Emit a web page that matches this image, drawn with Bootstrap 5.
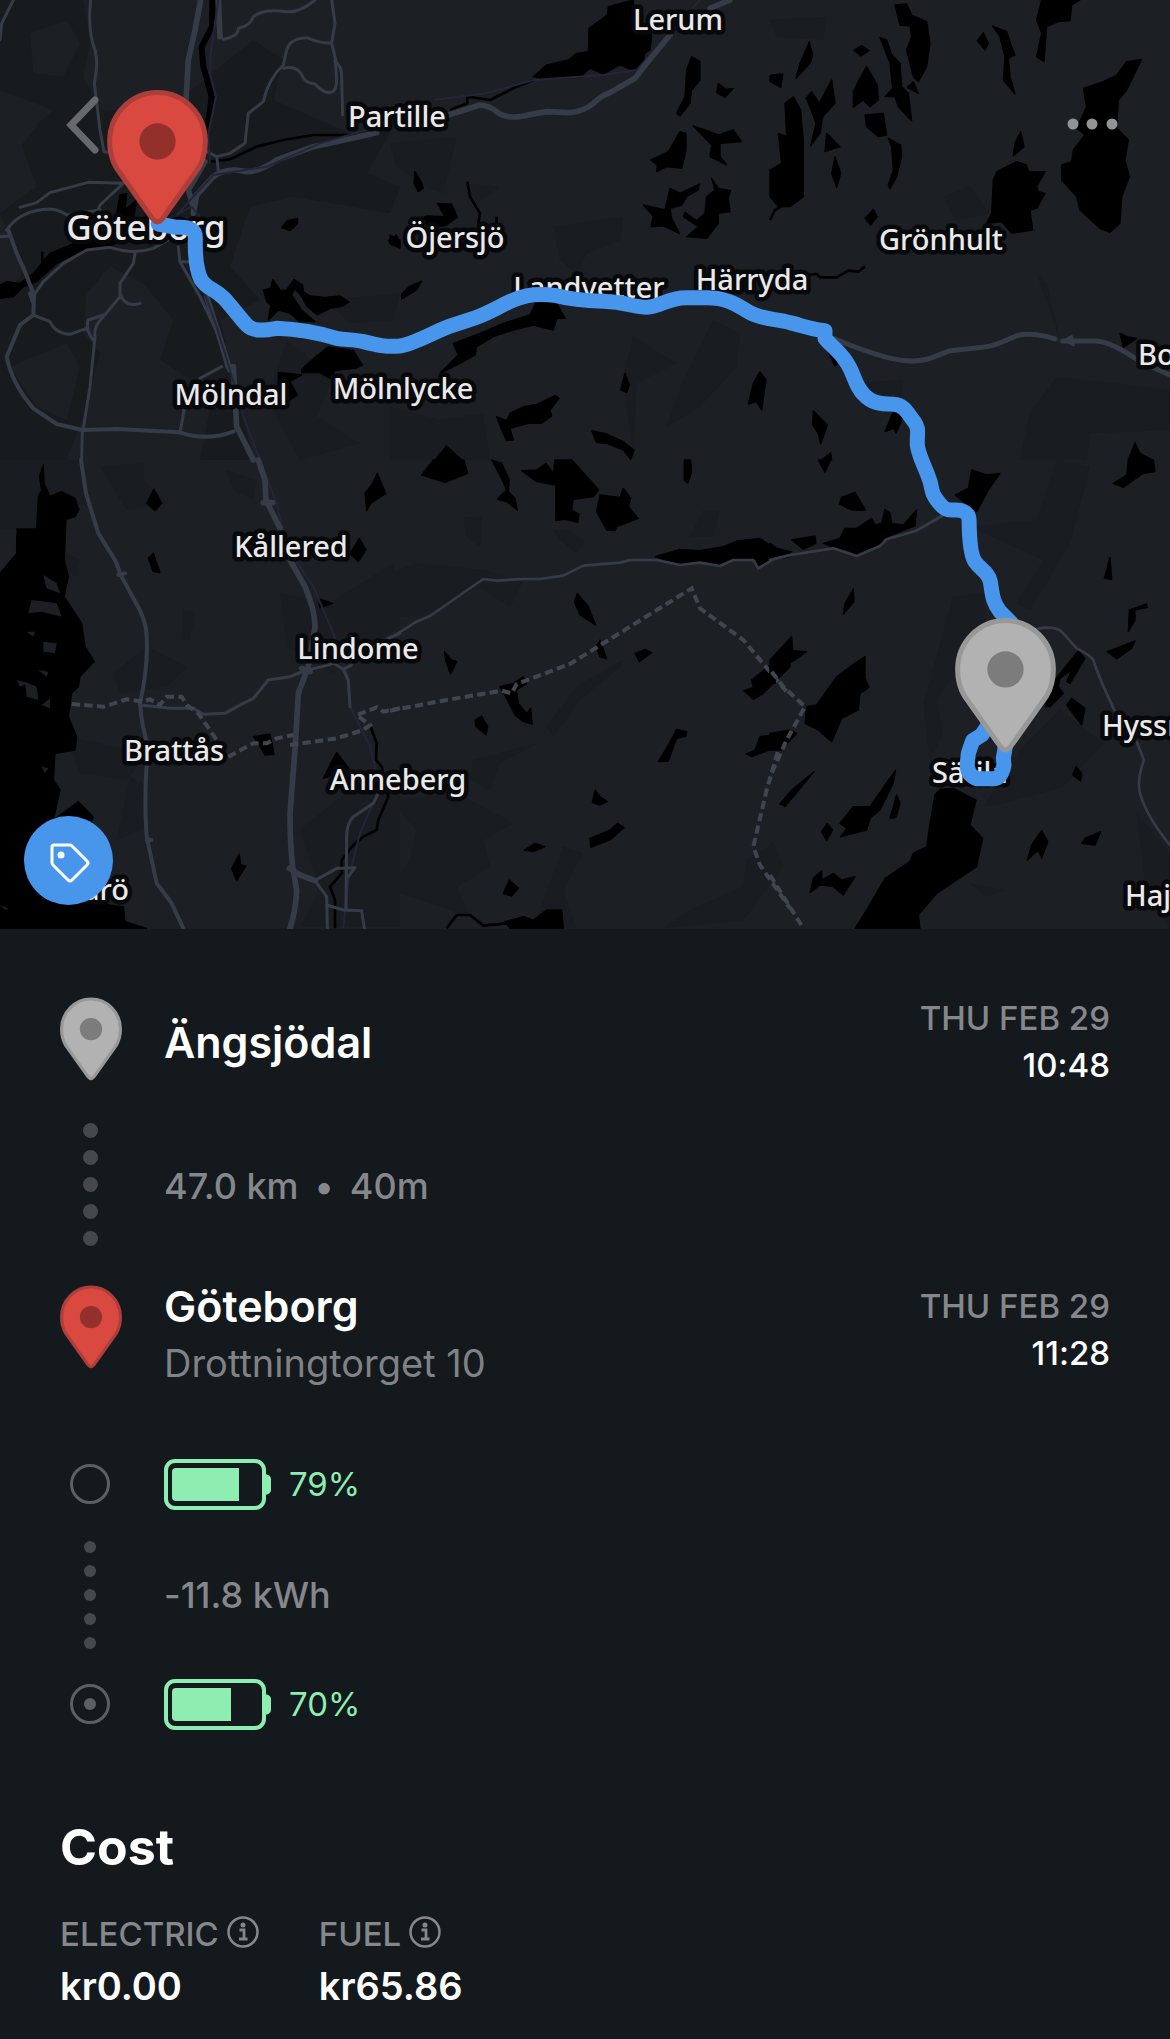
<!DOCTYPE html>
<html lang="en">
<head>
<meta charset="utf-8">
<meta name="viewport" content="width=device-width, initial-scale=1">
<title>Trip details</title>
<link rel="stylesheet" href="https://cdn.jsdelivr.net/npm/bootstrap@5.3.0/dist/css/bootstrap.min.css">
<script src="https://cdn.jsdelivr.net/npm/bootstrap@5.3.0/dist/js/bootstrap.bundle.min.js"></script>
<style>
  body { background: #14191d; color: #fff; font-family: Inter, "Liberation Sans", sans-serif; font-feature-settings: "calt" 0; }
  .map-view svg.map-art { display: block; width: 100%; height: auto; }
  .land { fill: #1c1f24; }
  .shade { fill: #191c20; }
  .shade.town-area { fill: #171b1e; }
  .lake { fill: #000; stroke: #000; stroke-width: 4; stroke-linejoin: round; }
  .stream { fill: none; stroke: #000; stroke-width: 8; stroke-linejoin: round; }
  .road { fill: none; stroke: #363c47; stroke-width: 9; stroke-linejoin: round; stroke-linecap: round; }
  .road.main { stroke-width: 17; }
  .road.mid { stroke-width: 12; }
  .rail { fill: none; stroke: #24253a; stroke-width: 6; }
  .border-line { fill: none; stroke: #404650; stroke-width: 12; stroke-dasharray: 25 13; }
  .trip-line { fill: none; stroke: #4895ec; stroke-width: 45; stroke-linejoin: round; stroke-linecap: round; }
  .town { font-family: "Noto Sans", "Open Sans", sans-serif; font-size: 29px; font-weight: 500; fill: #e9e9e9; stroke: #07080a; stroke-width: 9px; stroke-linejoin: round; paint-order: stroke; text-anchor: middle; }
  .town.city { font-size: 35px; }
  .town.from-left { text-anchor: start; }
  .map-btn { position: absolute; padding: 0; border: 0; background: none; line-height: 0; }
  .btn-back { left: 60px; top: 90px; }
  .btn-more { right: 48px; top: 105px; }
  .btn-tag { left: 24px; bottom: 24px; width: 89px; height: 89px; border-radius: 50%; background: #4895ec; }
  .trip-body { padding: 66px 60px 24px; }
  .rail-col { width: 60px; flex: none; }
  .pin-col { padding-top: 2px; }
  .step { gap: 44px; }
  .place { font-size: 43px; line-height: 46px; font-weight: 600; margin: 0; }
  .street { font-size: 38px; line-height: 48px; color: #808285; margin-top: 10px; }
  .when { font-size: 33px; line-height: 47px; font-weight: 500; }
  .dim { color: #85878a; }
  .metric { font-size: 36px; line-height: 46px; font-weight: 500; color: #85878a; }
  .leg { height: 194px; }
  .leg.energy { height: 169px; }
  .dots { gap: 12px; padding-bottom: 4px; }
  .dots i { width: 15px; height: 15px; border-radius: 50%; background: #45484d; }
  .energy .dots { padding-bottom: 0; }
  .energy .dots i { width: 12px; height: 12px; }
  .charge { margin-top: 72px; }
  .soc { gap: 18px; font-size: 33px; line-height: 51px; color: #8eedb1; }
  .cost-title { font-size: 50px; line-height: 58px; font-weight: 700; margin: 88px 0 35px; }
  .cost-row { gap: 60px; }
  .amount { font-size: 38px; line-height: 56px; font-weight: 600; }
  .info-btn { padding: 0; border: 0; background: none; color: #85878a; line-height: 0; margin-bottom: 6px; }
</style>
</head>
<body>
<svg width="0" height="0" class="position-absolute" aria-hidden="true">
  <symbol id="pin" viewBox="0 0 100 134">
    <path d="M50 131C47 131 45 128 43 125L9 77C5 70 2.500 62 2.500 51A47.500 48.500 0 0 1 97.500 51C97.500 62 95 70 91 77L57 125C55 128 53 131 50 131Z" fill="currentColor" stroke="var(--edge)" stroke-width="5"/>
    <circle cx="50" cy="51" r="18" fill="var(--hole)"/>
  </symbol>
  <symbol id="info" viewBox="0 0 32 32">
    <circle cx="16" cy="16" r="14.500" fill="none" stroke="currentColor" stroke-width="2.500"/>
    <circle cx="16" cy="9" r="2.500" fill="currentColor"/>
    <path d="M12.500 14H17V22.500M12 23H20.500" fill="none" stroke="currentColor" stroke-width="2.800"/>
  </symbol>
</svg>

<header class="map-view position-relative overflow-hidden">
<svg class="map-art" viewBox="0 0 1170 929" role="img" aria-label="Route map">
  <rect class="land" width="1170" height="929"/>
  <g transform="scale(.33333)">
    <!-- north-west -->
    <g>
      <path class="shade town-area" d="M0 0H250L270 120 250 230 300 330 500 330 760 120 850 180 820 300 1050 400 1180 380 1100 520 1200 560 1170 640 880 590 750 620 690 800 780 900 660 960 760 1380H600L640 1180 480 1080 520 960 430 850 330 800 260 880 250 1000 300 1060 250 1250 200 1380H0V900L70 820 0 640 110 560 60 420 160 330 0 270Z"/>
      <path class="land" d="M0 350 70 330 110 380 60 440 0 450ZM90 100 200 60 240 130 190 230 100 220ZM30 1100 200 1030 240 1100 200 1260 110 1220ZM330 1080 560 1130 620 1250 400 1260 320 1180ZM290 880 310 810 350 900 310 960Z"/>
      <path class="shade" d="M860 1020 1000 1130 950 1250 1080 1330 900 1380 800 1200ZM980 900 1200 880 1180 960 1050 970Z"/>
      <path class="stream" style="stroke-width:18" d="M637 0 636 80 605 140 610 200 635 290 630 330 600 480"/>
      <path class="stream" d="M630 485 690 478 770 440 850 420 940 405 1130 405"/>
      <path class="lake" d="M0 855 20 845 60 850 100 820 150 760 210 735 330 700 350 640 360 585 380 580 375 630 410 600 400 660 440 650 440 690 330 738 240 755 170 790 110 845 70 860 40 890 0 895ZM845 683 862 662 893 655 892 672 870 692ZM1165 722 1190 705 1200 735 1175 735ZM790 870 812 865 818 838 842 872 860 870 882 838 908 855 910 875 930 888 975 892 1020 888 1047 906 1030 918 990 925 952 945 920 918 905 890 885 865 875 885 905 930 945 965 900 965 870 940 835 930 805 960 812 915 800 905ZM905 1108 945 1072 985 1040 1060 1052 1087 1095 1070 1104 1005 1112 990 1135 960 1118 905 1118ZM835 1118 870 1120 905 1125 870 1145 892 1185 870 1200 835 1180Z"/>
      <path class="stream" d="M127 755V800"/>
      <path class="road" d="M40 0 5 70 0 120M272 0Q262 90 285 150 296 190 283 250L300 390 312 455 325 457M995 0 1005 70 995 130 1010 190Q1025 200 1025 230L1028 345M945 0Q900 38 860 35 790 25 760 50 750 78 715 85 715 110 670 118M995 130Q960 130 920 113 870 115 860 150L850 195Q805 235 790 305L745 340 735 430 690 460 650 470 620 455M850 205Q890 195 905 225 915 250 945 252 980 290 1002 272 1015 260 1005 180M650 470 655 510M60 622 110 608 150 578 265 547 370 550 300 615 290 640M20 690Q60 630 150 627 180 630 200 645L300 630M0 710 30 708M102 885 130 845 190 790 260 750 330 742Q400 765 460 745L540 700M405 760 400 790 360 850 360 890 310 950Q280 980 285 1010L270 1160 250 1285M360 880Q375 925 420 910M310 945 265 960Q255 990 280 1020M260 985 210 1003Q165 1000 150 965L100 945M535 740 540 785 600 890 655 1005 680 1100M600 1135 665 1100M540 785H575M553 1225 540 1300M247 1290 245 1380"/>
      <path class="road mid" d="M25 690 50 760 75 815 102 885 100 945 60 975 20 1070Q35 1150 100 1225L170 1272 247 1290 350 1287 540 1297Q620 1325 700 1295M90 880 100 910"/>
      <path class="road main" d="M602 0 585 90 565 180 558 300M655 0 660 110M615 485 565 570 580 620M1130 398 940 440 830 480Q780 515 740 515 680 500 640 530L590 585 580 640M700 1100 710 1280 760 1380M620 890 655 1000 690 1110"/>
      <path class="rail" d="M655 0 632 160 630 220 648 290 625 400 630 490M1170 370 960 430 800 500 640 525 530 645 575 620 600 650 610 870 650 980 690 1110 730 1250 780 1380"/>
    </g>
    <!-- north -->
    <g transform="translate(1170 0)">
      <path class="shade" d="M0 430 200 410 160 580 110 560 20 500ZM490 680 700 650 690 720 590 760 560 820 510 780ZM970 960 1050 1000 1040 1100 930 1220 830 1280 880 1140ZM730 1010 860 1090 740 1150 730 1380 700 1130ZM240 550 330 560 260 610ZM0 1220 150 1260 280 1240 300 1380 0 1380Z"/>
      <path class="lake" d="M430 230 470 195 535 180 560 160 595 155 597 85 652 45 655 20 730 0 735 60 785 105 780 150 765 160 755 205 730 212 690 195 640 222 600 205 570 232 450 235ZM905 170 930 185 930 240 905 270 900 310 870 348 860 340 885 290 890 210ZM985 250 1008 268 1030 265 1005 292 980 278ZM1145 225 1178 222 1172 262 1145 245ZM870 395 888 400 888 450 875 505 830 500 800 515 802 495 782 480 835 455ZM910 378 960 395 985 405 1030 390 1055 425 990 430 990 470 1010 495 960 470 965 435ZM840 565 870 580 928 552 925 570 890 590 875 615 840 625 845 655 868 700 820 678 783 680 790 648 760 615 825 630ZM965 535 985 565 1022 572 1015 595 1020 635 985 640 985 670 950 715 890 710 925 680 880 650 885 637 920 662 945 640 950 590 975 570ZM75 515 95 548 100 565 85 575 72 550ZM142 610 185 612 202 652 170 675 100 690 70 665 110 648 165 650ZM0 705 30 720 30 745 0 730ZM95 843 80 870 35 897 35 882 60 858ZM190 1030 270 1000 340 970 420 945 440 905 500 910 525 955 500 955 490 990 430 975 370 990 310 1010 260 1040 255 1065 210 1090 150 1120 205 1065ZM320 1250 350 1262 360 1240 400 1220 440 1213 495 1187 507 1195 480 1230 485 1248 455 1270 415 1270 360 1285 370 1320 350 1322 335 1290ZM705 1120 718 1155 710 1178 692 1170ZM605 1292 650 1302 700 1325 732 1350 722 1378 700 1350 650 1330 620 1328ZM1110 1115 1128 1140 1115 1230 1100 1205 1075 1212 1090 1150ZM135 1380 170 1338 215 1380Z"/>
      <path class="stream" d="M232 545 240 590 270 640 265 670 300 690M180 330 232 310 232 290 300 300 380 260 430 240M320 680V650"/>
      <path class="rail" d="M130 300 290 280 430 240 640 225 740 210 830 110 930 0"/>
      <path class="road main" d="M175 345 270 315Q300 318 320 335 345 355 390 350 440 340 470 335L540 338Q580 335 610 310 635 285 660 278L735 235 770 190 840 105M960 25 1020 0"/>
    </g>
    <!-- north-east -->
    <g transform="translate(2310 0)">
      <path class="shade" d="M780 1240 860 1130 1200 1170V1290L960 1300 950 1380H750ZM520 590 600 560 660 640 560 660ZM0 60 170 50 160 120 20 110ZM800 820 830 850 870 1020ZM240 1150 400 1140 390 1200Z"/>
      <path class="lake" d="M118 125 128 165 120 190 78 235 90 190ZM0 228 38 225 32 260 0 245ZM70 290 92 330 100 420 100 590 60 620 25 620 0 590V510L35 490 25 400 50 410 45 310ZM185 240 195 310 158 350 150 400 122 437 138 370 120 320 108 295 125 275 148 310ZM170 400 210 440 165 455ZM195 470 212 520 200 562 185 520ZM252 150 275 137 297 152 272 168ZM290 200 322 255 325 300 300 320 280 300 250 322 250 275 270 235ZM330 112 350 120 365 165 390 190 395 260 415 280 425 362 385 320 375 290 345 290 368 265 360 190ZM375 15 410 12 425 45 470 65 480 130 470 200 445 245 430 230 410 150 425 110 420 78 390 75ZM430 245 445 280 412 262ZM285 345 340 340 350 405 325 410 290 380ZM355 415 392 435 395 470 380 530 360 567 355 555 370 510 365 440ZM310 628 322 650 302 675 285 655ZM640 98 655 130 645 150 622 122ZM668 78 710 95 725 140 735 165 715 175 720 230 735 282 700 240 705 170 690 110ZM815 0H930L905 15 900 62 865 65 830 80 822 185 800 170 815 100 800 60ZM752 395 762 440 730 468 735 430ZM680 515 740 485 770 495 775 515 825 515 800 560 805 575 825 580 800 625 780 630 788 690 725 700 695 665 650 670 665 640 670 540ZM1115 178 1070 270 1045 300 1040 385 1075 420 1065 480 1078 530 1055 590 1050 670 1020 697 990 685 930 630 920 590 875 540 875 495 905 485 910 450 945 405 920 385 950 320 940 265 1000 245 1040 225 1070 185ZM1050 1000 1070 1010 1100 1015 1060 1042ZM165 1035 215 1080 195 1098ZM130 1232 172 1275 152 1332 145 1300 128 1275ZM370 1235 398 1255 378 1300 372 1285 345 1295ZM1095 1328 1110 1360 1150 1380H1075ZM182 1358 185 1380H155Z"/>
      <path class="stream" d="M110 825 140 822 150 832 200 832 235 812 265 815 285 800M50 610 15 630 0 660"/>
      <path class="road main" style="stroke-width:15" d="M190 1015Q270 1050 350 1072 430 1092 480 1075L540 1052 650 1040Q680 1035 740 1007 790 995 855 1017M878 1023H980Q1030 1028 1110 1085L1200 1125"/>
      <path class="road" d="M885 1020 905 1010 910 1035Z"/>
    </g>
    <!-- south-west -->
    <g transform="translate(0 1380)">
      <path class="shade" d="M0 0H240L260 140 190 110 120 170 110 210 0 210ZM300 20 430 10 430 60 500 130 380 150ZM680 30 770 60 760 120 700 90ZM550 450 585 460 570 540 545 540ZM840 400 990 430 1180 310 1200 500 1000 640 860 560ZM340 640 440 560 560 620 500 680 360 700ZM200 830 440 880 380 960 240 940ZM900 1110 1060 980 1200 1000V1400H900L960 1290ZM390 950 440 980 440 1100 350 1140ZM200 280 240 300 230 350 200 340Z"/>
      <path class="lake" d="M130 15 132 70 150 110 185 95 225 115 237 150 225 170 198 178 193 300 205 350 192 410 245 490 255 560 283 605 240 650 235 680 215 700 205 770 230 830 225 870 165 880 160 960 180 990 160 1080 235 1025 280 1072 250 1130 290 1330 370 1340 375 1385 440 1405H0V340L50 280V207H110L115 110 125 90 118 50ZM462 87 485 130 465 152 440 130ZM460 280 480 338 460 335 445 295ZM1132 40 1157 100 1112 130 1100 152 1095 100 1115 75ZM1078 235 1098 270 1075 305 1050 280ZM955 415 998 430 960 443ZM760 830 810 822 822 883 795 885 775 850ZM1010 877 1035 910 1050 930 970 955 990 915ZM718 1182 722 1215 738 1218 710 1262 695 1225Z"/>
      <path class="land" d="M0 210 50 210 45 270 0 260ZM130 345 170 370 180 400 140 385ZM95 420 170 430 185 470 125 455 85 460ZM130 545 170 550 165 580 130 575ZM80 515 105 515 100 530ZM115 630 145 635 140 650ZM50 660 85 670 60 680ZM75 665 110 680 115 720 80 710ZM125 735 150 715 150 745ZM125 920 145 925 135 940ZM0 1335 25 1345 15 1350Z"/>
      <path class="stream" d="M1112 800 1130 850 1128 900 1145 920 1165 1010 1135 1080 1130 1110 1090 1130 1060 1155 1025 1200 1025 1240 990 1280 1005 1320V1405"/>
      <path class="rail" d="M780 0 830 130 860 260 940 380 1000 520 1040 640 1050 740 1110 860 1140 980 1080 1120 1045 1260 1030 1405"/>
      <path class="road" style="stroke-width:12" d="M243 0 258 100 295 220 345 300 365 350 400 415Q440 480 440 530 445 620 420 730 425 800 445 860 430 1000 440 1130L470 1270 515 1330 550 1405M355 345 375 340M440 1140 455 1140"/>
      <path class="road" d="M420 735 510 745 580 745 610 763 675 760 720 735 760 715 805 660 870 650 920 630Q970 620 1000 610L1030 628 1055 615M1030 628 1045 660 1050 740M1135 1000 1120 1030 1060 1070Q1040 1090 1040 1130L1038 1350M945 1262 1010 1225 1065 1223 1045 1250M880 1240 945 1262 980 1310 982 1405M980 1335 1030 1350 1085 1352 1093 1405M1140 545 1200 520"/>
      <path class="road main" d="M775 0 795 60 798 120 840 205M870 300 915 380Q945 450 945 500L925 620 895 700 885 870 870 1060Q870 1150 878 1220L890 1290Q888 1350 870 1405"/>
      <path class="road main" d="M790 128H818M868 1225 900 1245 945 1262M905 625 930 635"/>
      <path class="border-line" d="M215 732 310 740 380 718 430 725 450 718 480 735 500 710 545 710 560 735 595 760 650 840M685 890 760 850 800 850 830 835 880 825M870 855 1010 835 1090 810 1110 795 1070 765 1130 742 1150 755 1200 745"/>
    </g>
    <!-- south -->
    <g transform="translate(1170 1380)">
      <path class="shade" d="M0 340 80 310 280 330 400 360 360 440 270 380 90 470 0 470ZM220 170 275 175 270 260 230 230ZM490 210 540 210 585 245 560 280 510 240ZM470 800 560 680 700 600 690 620 570 720 490 830ZM250 900 440 850 330 910 300 990 240 960ZM0 1020 200 1000 370 1090 280 1140 300 1220 200 1280 240 1370 0 1290 60 1200 80 1110ZM520 1160 580 1180 520 1290 560 1405H430ZM900 1350 1060 1280 1070 1200 1150 1150 1180 1220 1060 1380 820 1405ZM940 150 990 150 970 230 900 230Z"/>
      <path class="lake" d="M130 0H222L233 40 165 67 95 45ZM305 0 335 10 358 60 355 95 375 115 382 150 350 125 322 118 350 90 335 55ZM495 0H545L600 60 626 90 610 110 550 118 545 150 567 162 563 187 525 178 497 182 497 75 440 65 395 32 440 30 468 10 490 40ZM700 85 722 115 715 140 745 175 680 200 675 212 650 210 620 155 630 105 690 112ZM883 0H902L905 35 893 70 883 60ZM795 290 870 268 930 272 1000 260 1040 243 1110 235 1150 262 1200 275V290L1140 300 1105 325 1090 300 1030 297 990 318 930 308 870 315ZM562 400 595 440 617 495 570 465 553 425ZM163 575 185 600 200 605 182 642 168 605ZM330 680 370 670 400 650 410 670 380 690 385 730 410 760 422 745 427 792 400 785 375 765 352 720ZM255 780 275 768 293 800 288 825 258 800ZM630 540 650 597 630 590 618 560ZM735 580 765 568 785 578 748 605ZM1200 545 1160 600 1085 660 1090 682 1062 692 1090 718 1120 700 1200 620ZM860 808 890 815 888 828 860 835 835 903 805 905 835 855ZM1200 810 1150 825 1110 830 1095 870 1068 882 1085 890 1150 865 1200 840ZM615 990 630 1010 652 1025 630 1035 607 1028ZM600 1135 660 1110 683 1090 702 1103 660 1140 602 1162ZM403 1170 435 1150 465 1160 430 1175ZM358 1260 385 1285 365 1308 340 1300ZM345 1385 400 1370 430 1380 470 1350 515 1350 520 1405H360Z"/>
      <path class="stream" d="M170 1405 200 1365 240 1365 280 1397 350 1390M1200 1000 1170 1035"/>
      <path class="road" style="stroke-width:8" d="M0 535 80 485 120 468 280 357 320 362 400 357 450 357 520 347 580 317 690 308 720 300 800 300 870 315 930 308 990 318 1030 300 1090 300 1105 325 1150 298 1200 285"/>
      <path class="border-line" d="M0 752 170 720 335 692 365 700 380 672 540 612 680 525 905 385 930 445 1060 540 1190 695M1200 810 1165 870 1130 990 1090 1160 1110 1215 1200 1345"/>
    </g>
    <!-- south-east -->
    <g transform="translate(2310 1380)">
      <path class="shade" d="M860 0 960 20 900 250 780 450 740 430 820 300 600 200 800 180ZM550 410 640 400 650 500 500 720 520 820 480 900 460 730ZM870 750 1000 850 880 980 700 1030 640 1040 750 870ZM1100 1060 1200 1180V1405L1130 1300ZM600 1270 700 1290 650 1310Z"/>
      <path class="lake" d="M145 0H182L165 37ZM1075 0H1150L1155 35 1120 40 1060 82 1030 70 1070 45ZM605 30 650 45 690 40 655 90 620 155 555 105 595 85ZM255 97 287 150 245 150 208 132 215 112ZM0 250 30 272 65 275 0 290ZM65 240 135 228 138 250 100 268ZM160 250 210 235 225 205 260 205 305 175 315 195 335 190 345 148 360 160 365 190 400 195 440 150 435 198 390 215 340 235 330 255 260 285 230 270 190 262ZM250 387 252 425 220 462 225 430ZM1020 293 1025 358 1003 355ZM1130 432 1132 442 1095 450 1095 480 1075 515 1078 450ZM1012 575 1095 543 1085 565 1040 597ZM65 530 68 572 110 575 75 600 20 630 15 670 0 670V600ZM285 590 285 655 297 682 270 700 265 750 215 775 185 845 145 810 105 790 110 740 140 735 200 650 240 620ZM0 820 60 810 80 820 35 870 0 870ZM925 572 945 595 900 670 890 665 905 630 870 655 865 680 880 700 840 740 825 740 855 660ZM905 715 945 745 935 795 890 735ZM918 920 935 940 932 963 908 945ZM132 935 45 1040 32 1030 65 990ZM377 930 370 970 330 1050 300 1075 290 1110 212 1130 230 1105 210 1090 250 1040 300 1040ZM380 1005 390 1030 378 1072 360 1075ZM172 1090 188 1110 170 1142 155 1115ZM495 1005 510 988 550 985 618 1020 600 1095 638 1135 620 1220 500 1300 445 1365 450 1405H255L290 1350 345 1255 420 1205 430 1180 470 1160 480 1090ZM155 1232 155 1260 190 1240 215 1260 255 1250 220 1305 190 1280 150 1275 120 1298 130 1255ZM815 1112 833 1145 815 1195 805 1170 772 1200 785 1155ZM992 1115 975 1155 935 1150 945 1135Z"/>
      <path class="road" style="stroke-width:8" d="M0 300 60 285 190 265 260 288 330 258 350 238 440 212 520 165M800 507Q860 495 880 520L920 565Q960 585 970 600 985 650 1040 765M1100 845 1122 900Q1100 960 1110 1000 1130 1070 1200 1155"/>
      <path class="border-line" d="M5 635 40 680 105 740 50 840 0 950M0 1245 100 1405"/>
    </g>
  </g>

  <g>
    <text class="town" x="678" y="30">Lerum</text>
    <text class="town" x="397" y="127">Partille</text>
    <text class="town city" x="146" y="240">Göteborg</text>
    <text class="town" x="455" y="248">Öjersjö</text>
    <text class="town" x="589" y="298">Landvetter</text>
    <text class="town" x="752" y="290">Härryda</text>
    <text class="town" x="941" y="250">Grönhult</text>
    <text class="town from-left" x="1138" y="365">Bo</text>
    <text class="town" x="231" y="405">Mölndal</text>
    <text class="town" x="403" y="399">Mölnlycke</text>
    <text class="town" x="291" y="557">Kållered</text>
    <text class="town" x="358" y="659">Lindome</text>
    <text class="town" x="174" y="761">Brattås</text>
    <text class="town" x="398" y="790">Anneberg</text>
    <text class="town from-left" x="1102" y="736">Hyssn</text>
    <text class="town from-left" x="1125" y="906">Haj</text>
    <text class="town from-left" x="932" y="783">Sätila</text>
    <text class="town" x="98" y="900">Särö</text>
  </g>

  <g transform="scale(.33333)">
    <path class="trip-line" d="M475 672 530 682Q588 678 586 715 584 800 603 838C620 868 640 862 672 895 700 925 715 948 740 975 760 995 790 992 830 985 900 988 960 1000 1010 1015 1040 1020 1060 1018 1090 1025 1130 1035 1160 1042 1200 1038 1250 1030 1310 990 1360 975 1440 950 1450 945 1490 925 1560 885 1600 878 1670 887 1720 900 1760 902 1810 904 1880 906 1900 922 1940 922 1985 920 2000 893 2060 893L2120 893C2190 893 2220 922 2250 938 2290 960 2330 956 2370 968 2400 975 2440 990 2475 992V1015C2490 1035 2515 1050 2535 1080 2565 1120 2560 1150 2590 1182 2615 1210 2640 1212 2680 1213 2715 1215 2722 1240 2742 1264 2760 1290 2750 1300 2752 1335 2755 1365 2775 1400 2785 1430 2800 1465 2790 1470 2805 1492 2840 1545 2850 1526 2880 1531 2915 1540 2906 1560 2908 1590 2910 1640 2915 1670 2925 1685 2940 1708 2965 1715 2971 1745 2978 1790 2978 1805 3000 1835L3035 1870"/>
    <path class="trip-line" d="M2965 2175 2945 2205 2918 2222 2905 2260 2902 2290Q2900 2325 2930 2336H2985Q3005 2332 3012 2295L3010 2275 3016 2240"/>
  </g>
  <g color="#da4940" style="--edge:#ae3e39;--hole:#94302c"><use href="#pin" x="107" y="90" width="101" height="135"/></g>
  <g color="#b2b2b2" style="--edge:#989898;--hole:#7c7c7c"><use href="#pin" x="955" y="618" width="101" height="135"/></g>
</svg>
  <button class="map-btn btn-back" type="button" aria-label="Back">
    <svg width="44" height="70" viewBox="0 0 44 70" fill="none" stroke="#66686b" stroke-width="7" stroke-linecap="round" stroke-linejoin="miter"><path d="M35 10 11 35 35 60"/></svg>
  </button>
  <button class="map-btn btn-more" type="button" aria-label="More options">
    <svg width="60" height="36" viewBox="0 0 60 36" fill="#929394"><circle cx="11" cy="19" r="5.500"/><circle cx="30" cy="19" r="5.500"/><circle cx="50" cy="19" r="5.500"/></svg>
  </button>
  <button class="map-btn btn-tag" type="button" aria-label="Tag trip">
    <svg width="89" height="89" viewBox="0 0 89 89" fill="none" stroke="#fff" stroke-width="3" stroke-linejoin="round"><path d="M30 29H46Q47 29 48 30L63 45Q65 47 63 49L48 64Q46 66 44 64L29 49Q28 48 28 47V31Q28 29 30 29Z"/><circle cx="37" cy="39" r="3.500" fill="#fff" stroke="none"/></svg>
  </button>
</header>

<main class="trip-body">
  <section aria-label="Trip">
    <div class="step d-flex align-items-start">
      <div class="rail-col pin-col" style="color:#b2b2b2;--edge:#989898;--hole:#7c7c7c"><svg class="d-block" width="62" height="84"><use href="#pin"/></svg></div>
      <h2 class="place flex-grow-1 align-self-center">Ängsjödal</h2>
      <div class="when text-end"><div class="dim">THU FEB 29</div><time>10:48</time></div>
    </div>
    <div class="step leg d-flex align-items-center">
      <div class="rail-col dots d-flex flex-column align-items-center"><i></i><i></i><i></i><i></i><i></i></div>
      <div class="metric d-flex"><span>47.0 km</span><span class="px-3 mx-n1">•</span><span>40m</span></div>
    </div>
    <div class="step d-flex align-items-start">
      <div class="rail-col pin-col" style="color:#da4940;--edge:#ae3e39;--hole:#94302c"><svg class="d-block" width="62" height="84"><use href="#pin"/></svg></div>
      <div class="flex-grow-1"><h2 class="place">Göteborg</h2><div class="street">Drottningtorget 10</div></div>
      <div class="when text-end"><div class="dim">THU FEB 29</div><time>11:28</time></div>
    </div>
  </section>

  <section class="charge" aria-label="Battery">
    <div class="step d-flex align-items-center">
      <div class="rail-col d-flex justify-content-center"><svg width="42" height="42" fill="none" stroke="#5c5f64" stroke-width="3"><circle cx="21" cy="20" r="18.500"/></svg></div>
      <div class="soc d-flex align-items-center"><svg width="107" height="51" viewBox="0 0 107 51"><rect x="2" y="2" width="98" height="47" rx="9" fill="none" stroke="#8eedb1" stroke-width="4"/><path d="M101 15Q107 16 107 20V31Q107 35 101 36Z" fill="#8eedb1"/><path d="M12 9H75V42H12Q8 42 8 38V13Q8 9 12 9Z" fill="#8eedb1"/></svg><span>79%</span></div>
    </div>
    <div class="step leg energy d-flex align-items-center">
      <div class="rail-col dots d-flex flex-column align-items-center"><i></i><i></i><i></i><i></i><i></i></div>
      <div class="metric">-11.8 kWh</div>
    </div>
    <div class="step d-flex align-items-center">
      <div class="rail-col d-flex justify-content-center"><svg width="42" height="42" fill="none" stroke="#5c5f64" stroke-width="3"><circle cx="21" cy="20" r="18.500"/><circle cx="21" cy="20" r="6" fill="#5c5f64" stroke="none"/></svg></div>
      <div class="soc d-flex align-items-center"><svg width="107" height="51" viewBox="0 0 107 51"><rect x="2" y="2" width="98" height="47" rx="9" fill="none" stroke="#8eedb1" stroke-width="4"/><path d="M101 15Q107 16 107 20V31Q107 35 101 36Z" fill="#8eedb1"/><path d="M12 9H67V42H12Q8 42 8 38V13Q8 9 12 9Z" fill="#8eedb1"/></svg><span>70%</span></div>
    </div>
  </section>

  <section aria-labelledby="cost">
    <h2 class="cost-title" id="cost">Cost</h2>
    <div class="cost-row d-flex">
      <div>
        <div class="when dim d-flex align-items-center gap-2"><span>ELECTRIC</span><button class="info-btn" type="button" aria-label="About electric cost"><svg width="32" height="32"><use href="#info"/></svg></button></div>
        <div class="amount">kr0.00</div>
      </div>
      <div>
        <div class="when dim d-flex align-items-center gap-2"><span>FUEL</span><button class="info-btn" type="button" aria-label="About fuel cost"><svg width="32" height="32"><use href="#info"/></svg></button></div>
        <div class="amount">kr65.86</div>
      </div>
    </div>
  </section>
</main>
</body>
</html>
